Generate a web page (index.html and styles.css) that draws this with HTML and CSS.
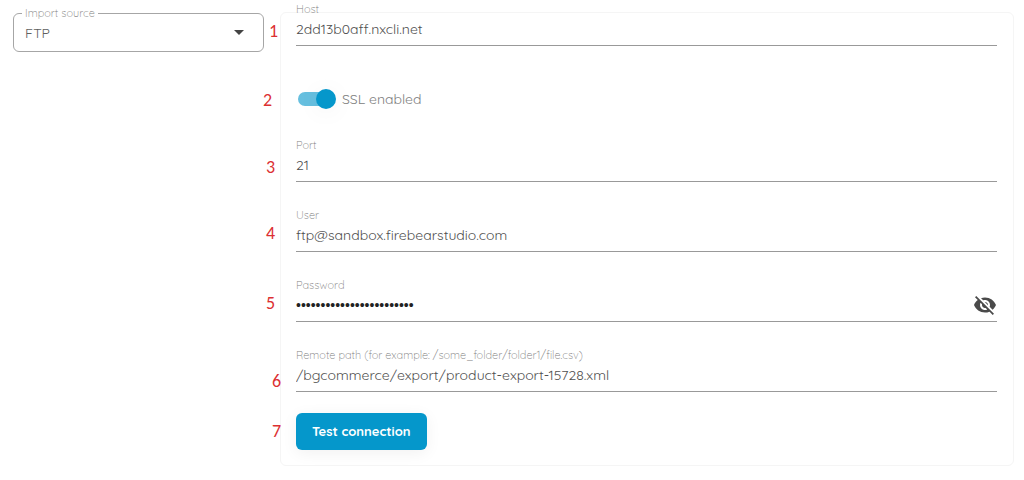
FILE: index.html
```html
<!DOCTYPE html>
<html lang="en">
<head>
<meta charset="utf-8">
<title>Import source</title>
<link rel="stylesheet" href="styles.css">
</head>
<body>
<main class="page">
  <div class="source">
    <fieldset class="outlined">
      <legend class="outlined-legend"><label for="source">Import source</label></legend>
      <select id="source" class="outlined-select"><option>FTP</option></select>
      <svg class="caret" width="10" height="5" viewBox="0 0 10 5" aria-hidden="true"><path d="M0 0h10L5 5z"/></svg>
    </fieldset>
  </div>
  <form class="panel">
    <div class="field">
      <span class="marker marker-close">1</span>
      <label class="label" for="host">Host</label>
      <input class="input" id="host" type="text" value="2dd13b0aff.nxcli.net">
    </div>
    <div class="toggle-row">
      <span class="marker marker-toggle">2</span>
      <input class="switch" id="ssl" type="checkbox" checked>
      <label class="switch-label" for="ssl">SSL enabled</label>
    </div>
    <div class="field">
      <span class="marker">3</span>
      <label class="label" for="port">Port</label>
      <input class="input" id="port" type="text" value="21">
    </div>
    <div class="field">
      <span class="marker marker-raised">4</span>
      <label class="label" for="user">User</label>
      <input class="input" id="user" type="text" value="ftp@sandbox.firebearstudio.com">
    </div>
    <div class="field">
      <span class="marker marker-raised">5</span>
      <label class="label" for="password">Password</label>
      <div class="input-group">
        <input class="input input-password" id="password" type="password" value="abcdefghijklmnopqrstuvwx">
        <button class="reveal" type="button" aria-label="Show password">
          <svg width="24" height="24" viewBox="0 0 24 24" aria-hidden="true"><path d="M12 7c2.76 0 5 2.24 5 5 0 .65-.13 1.26-.36 1.83l2.92 2.92c1.51-1.26 2.7-2.89 3.43-4.75-1.73-4.39-6-7.5-11-7.5-1.4 0-2.74.25-3.98.7l2.16 2.16C10.74 7.13 11.35 7 12 7zM2 4.27l2.28 2.28.46.46C3.08 8.3 1.78 10.02 1 12c1.73 4.39 6 7.5 11 7.5 1.55 0 3.03-.3 4.38-.84l.42.42L19.73 22 21 20.73 3.27 3 2 4.27zM7.53 9.8l1.55 1.55c-.05.21-.08.43-.08.65 0 1.66 1.34 3 3 3 .22 0 .44-.03.65-.08l1.55 1.55c-.67.33-1.41.53-2.2.53-2.76 0-5-2.24-5-5 0-.79.2-1.53.53-2.2zm4.31-.78l3.15 3.15.02-.16c0-1.66-1.34-3-3-3l-.17.01z"/></svg>
        </button>
      </div>
    </div>
    <div class="field">
      <span class="marker marker-near">6</span>
      <label class="label" for="path">Remote path (for example: /some_folder/folder1/file.csv)</label>
      <input class="input" id="path" type="text" value="/bgcommerce/export/product-export-15728.xml">
    </div>
    <div class="actions">
      <span class="marker marker-near marker-action">7</span>
      <button class="primary" type="button">Test connection</button>
    </div>
  </form>
</main>
</body>
</html>
```
FILE: styles.css
```css
* { box-sizing: border-box; }

body {
  margin: 0;
  background: #fff;
  color: #505050;
  font-family: Quicksand, Lato, sans-serif;
  font-size: 14px;
}

.page {
  display: grid;
  grid-template-columns: 251px 1fr;
  gap: 16px;
  padding: 12px 10px 14px 13px;
}

.outlined {
  position: relative;
  display: flex;
  align-items: center;
  height: 46px;
  min-width: 0;
  margin: -6px 0 0;
  padding: 0;
  border: 1px solid #a6a6a6;
  border-radius: 6px;
}

.outlined-legend {
  margin-left: 8px;
  padding: 0 3px;
  color: #808080;
  font-size: 11px;
  font-weight: 300;
  line-height: 14px;
}

.outlined-select {
  width: 100%;
  height: 30px;
  padding: 0 32px 6px 11px;
  border: 0;
  background: transparent;
  color: #606060;
  font: inherit;
  appearance: none;
}

.caret {
  position: absolute;
  right: 19px;
  top: 10px;
  fill: #444;
  pointer-events: none;
}

.panel {
  display: flex;
  flex-direction: column;
  gap: 25px;
  padding: 0 16px 15px 15px;
  border: 1px solid #f5f5f5;
  border-radius: 6px;
}

.field {
  position: relative;
  display: flex;
  flex-direction: column;
}

.field:first-child { margin-top: -12px; }

.label {
  color: #808080;
  font-size: 11px;
  font-weight: 300;
  line-height: 16px;
}

.input {
  width: 100%;
  height: 29px;
  padding: 0 0 4px;
  border: 0;
  border-bottom: 1px solid #999;
  border-radius: 0;
  background: transparent;
  color: #505050;
  font: inherit;
  outline: 0;
}

.input-group {
  display: flex;
  border-bottom: 1px solid #999;
}

.input-password {
  flex: 1;
  height: 28px;
  border: 0;
  color: #222;
  font-family: "Liberation Sans", sans-serif;
  font-size: 14px;
}

.reveal {
  display: flex;
  align-items: center;
  padding: 0 0 4px;
  border: 0;
  background: transparent;
  fill: #4a4a4a;
}

.toggle-row {
  position: relative;
  display: flex;
  align-items: center;
  gap: 6px;
  height: 41px;
  padding: 15px 0 0 2px;
}

.switch {
  position: relative;
  width: 38px;
  height: 20px;
  margin: 0;
  appearance: none;
}

.switch::before {
  content: "";
  position: absolute;
  inset: 3px 4px 3px 0;
  border-radius: 7px;
  background: #66bfdf;
}

.switch::after {
  content: "";
  position: absolute;
  top: 0;
  right: 0;
  width: 20px;
  height: 20px;
  border-radius: 50%;
  background: #0597cb;
  box-shadow: 0 3px 24px rgba(0, 0, 0, 0.06);
}

.switch-label { color: #808080; }

.actions {
  position: relative;
  display: flex;
  margin-top: -4px;
}

.primary {
  height: 37px;
  padding: 0 16px 2px;
  border: 0;
  border-radius: 6px;
  background: #0597cb;
  color: #fff;
  box-shadow: 0 3px 16px rgba(0, 0, 0, 0.06);
  font: inherit;
  font-size: 13px;
  font-weight: 700;
}

/* Callout numbers laid over the gutter beside each control */
.marker {
  position: absolute;
  right: calc(100% + 21px);
  bottom: 4px;
  color: #dc3032;
  font-family: Carlito, Lato, sans-serif;
  font-size: 18px;
  line-height: 22px;
}

.marker-close { right: calc(100% + 18px); }
.marker-near { right: calc(100% + 15px); bottom: 0; }
.marker-raised { bottom: 8px; }
.marker-toggle { right: calc(100% + 24px); bottom: 1px; }
.marker-action { bottom: 8px; }
```
